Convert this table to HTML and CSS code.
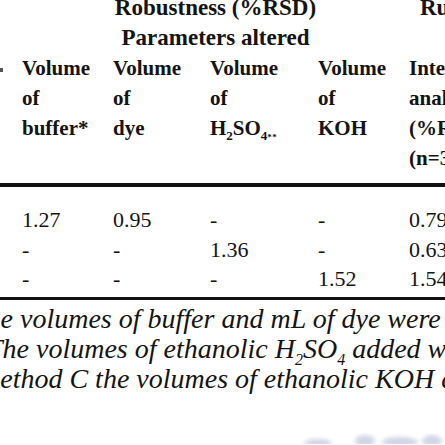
FILE: index.html
```html
<!DOCTYPE html>
<html>
<head>
<meta charset="utf-8">
<link rel="stylesheet" href="styles.css">
</head>
<body>
<div class="page">
  <div class="thead">
    <div class="row title"><span class="span">Robustness (%RSD)</span><span class="ru">Ruggedness</span></div>
    <div class="row title"><span class="span">Parameters altered</span></div>
    <div class="row hd"><span class="c1"><i class="mark"></i></span><span>Volume</span><span>Volume</span><span>Volume</span><span>Volume</span><span>Inter-</span></div>
    <div class="row hd"><span class="c1"></span><span>of</span><span>of</span><span>of</span><span>of</span><span>analyst</span></div>
    <div class="row hd"><span class="c1"></span><span>buffer*</span><span>dye</span><span>H<span class="sub">2</span>SO<span class="sub">4<span class="stars">**</span></span></span><span>KOH</span><span>(%RSD)</span></div>
    <div class="row hd"><span class="c1"></span><span></span><span></span><span></span><span></span><span>(n=3)</span></div>
  </div>
  <div class="tbody">
    <div class="row dt"><span class="c1"></span><span>1.27</span><span>0.95</span><span>-</span><span>-</span><span>0.79</span></div>
    <div class="row dt"><span class="c1"></span><span>-</span><span>-</span><span>1.36</span><span>-</span><span>0.63</span></div>
    <div class="row dt"><span class="c1"></span><span>-</span><span>-</span><span>-</span><span>1.52</span><span>1.54</span></div>
  </div>
  <div class="notes">
    <p class="note n1">*The volumes of buffer and mL of dye were varied</p>
    <p class="note n2">The volumes of ethanolic H<span class="nsub">2</span>SO<span class="nsub">4</span> added were varied</p>
    <p class="note n3">method C the volumes of ethanolic KOH added were varied</p>
  </div>
  <div class="smudge">
    <svg width="445" height="15" viewBox="0 0 445 15">
      <defs><filter id="b"><feGaussianBlur stdDeviation="2"/></filter></defs>
      <g filter="url(#b)" fill="#9aa3c4" opacity="0.45">
        <ellipse cx="318" cy="14" rx="14" ry="4"/>
        <ellipse cx="365" cy="12" rx="10" ry="6"/>
        <ellipse cx="400" cy="13" rx="18" ry="5"/>
        <ellipse cx="432" cy="12" rx="10" ry="6"/>
      </g>
    </svg>
  </div>
</div>
</body>
</html>
```
FILE: styles.css
```css
html, body {
  margin: 0;
  padding: 0;
  background: #ffffff;
}
.page {
  width: 445px;
  height: 445px;
  overflow: hidden;
  font-family: "Liberation Serif", "Times New Roman", serif;
  color: #141414;
}
.thead {
  margin-top: -7px;
  font-weight: bold;
  padding-bottom: 10px;
  border-bottom: 4px solid #111111;
}
.row {
  display: grid;
  grid-template-columns: 22px 91px 97px 108px 91px 200px;
  line-height: 30px;
  white-space: nowrap;
}
.title {
  font-size: 23px;
}
.title .span {
  grid-column: 2 / 6;
  text-align: center;
}
.title .ru {
  grid-column: 6;
  padding-left: 11px;
}
.hd {
  font-size: 21px;
}
.mark {
  display: inline-block;
  width: 3px;
  height: 4px;
  background: #555555;
  vertical-align: 3px;
}
.sub {
  font-size: 13px;
  line-height: 0;
  vertical-align: -5px;
}
.stars {
  font-size: 9px;
  letter-spacing: 0.5px;
}
.tbody {
  padding-top: 18px;
  padding-bottom: 3px;
  border-bottom: 3px solid #111111;
}
.dt {
  font-size: 22px;
  line-height: 29.5px;
}
.notes {
  padding-top: 4px;
}
.note {
  margin: 0;
  font-style: italic;
  font-size: 28px;
  line-height: 30px;
  white-space: nowrap;
}
.n1 {
  text-indent: -43px;
}
.n2 {
  text-indent: -13px;
}
.n3 {
  text-indent: -20px;
}
.nsub {
  font-size: 16px;
  line-height: 0;
  vertical-align: -7px;
}
.smudge {
  margin-top: 35px;
  height: 15px;
}
.smudge svg {
  display: block;
}
```
